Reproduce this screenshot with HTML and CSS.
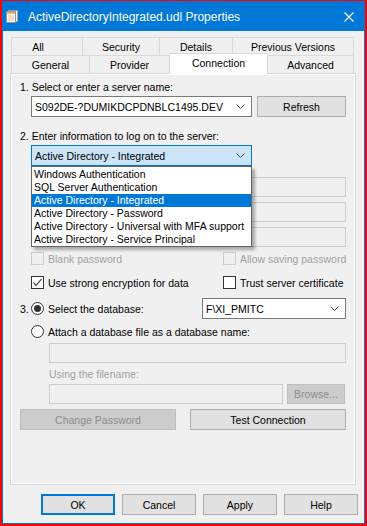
FILE: index.html
```html
<!DOCTYPE html>
<html lang="en">
<head>
    <meta charset="UTF-8">
    <title>ActiveDirectoryIntegrated.udl Properties</title>
    <link rel="stylesheet" href="styles.css">
</head>
<body>
    <div class="window">
        <div class="titlebar">
            <svg class="title-icon" width="12" height="13" viewBox="0 0 12 13">
                <rect x="2.5" y="0.5" width="9" height="11" fill="#f4f4f4" stroke="#9aa4b0"/>
                <rect x="0.5" y="1.5" width="9" height="11" fill="#ffffff" stroke="#8c96a3"/>
                <rect x="1" y="2" width="8" height="2" fill="#f0b27a"/>
                <line x1="2" y1="6" x2="8" y2="6" stroke="#e8b98c"/>
                <line x1="2" y1="8" x2="8" y2="8" stroke="#e8b98c"/>
                <line x1="2" y1="10" x2="8" y2="10" stroke="#e8b98c"/>
            </svg>
            <span class="title-text">ActiveDirectoryIntegrated.udl Properties</span>
            <svg class="close-icon" width="10" height="10" viewBox="0 0 10 10">
                <path d="M0.5 0.5 L9.5 9.5 M9.5 0.5 L0.5 9.5" stroke="#ffffff" stroke-width="1.1" fill="none"/>
            </svg>
        </div>

        <div class="client">
            <div class="tabs">
                <div class="tab-row">
                    <div class="tab tab-all">All</div>
                    <div class="tab tab-security">Security</div>
                    <div class="tab tab-details">Details</div>
                    <div class="tab tab-previous">Previous Versions</div>
                </div>
                <div class="tab-row">
                    <div class="tab tab-general">General</div>
                    <div class="tab tab-provider">Provider</div>
                    <div class="tab tab-connection selected">Connection</div>
                    <div class="tab tab-advanced">Advanced</div>
                </div>
            </div>

            <div class="panel">
                <div class="label">1. Select or enter a server name:</div>
                <div class="server-row">
                    <div class="combo server-combo">
                        <span class="combo-text">S092DE-?DUMIKDCPDNBLC1495.DEV</span>
                        <svg class="chevron" width="9" height="5" viewBox="0 0 9 5"><polyline points="0.5,0.5 4.5,4.5 8.5,0.5" fill="none" stroke="#444"/></svg>
                    </div>
                    <button class="btn refresh-btn">Refresh</button>
                </div>

                <div class="label step-two">2. Enter information to log on to the server:</div>
                <div class="auth-block">
                    <div class="combo auth-combo focused">
                        <span class="combo-text">Active Directory - Integrated</span>
                        <svg class="chevron" width="9" height="5" viewBox="0 0 9 5"><polyline points="0.5,0.5 4.5,4.5 8.5,0.5" fill="none" stroke="#444"/></svg>
                    </div>
                    <ul class="dropdown">
                        <li>Windows Authentication</li>
                        <li>SQL Server Authentication</li>
                        <li class="highlight">Active Directory - Integrated</li>
                        <li>Active Directory - Password</li>
                        <li>Active Directory - Universal with MFA support</li>
                        <li>Active Directory - Service Principal</li>
                    </ul>
                    <div class="cred-list">
                        <div class="textbox disabled"></div>
                        <div class="textbox disabled"></div>
                        <div class="textbox disabled"></div>
                    </div>
                    <div class="check-grid first">
                        <div class="check disabled"><span class="box"></span>Blank password</div>
                        <div class="check disabled"><span class="box"></span>Allow saving password</div>
                    </div>
                    <div class="check-grid second">
                        <div class="check">
                            <span class="box">
                                <svg width="11" height="11" viewBox="0 0 11 11"><polyline points="1.5,5.5 4,8.5 9.5,2" fill="none" stroke="#222" stroke-width="1.1"/></svg>
                            </span>Use strong encryption for data
                        </div>
                        <div class="check"><span class="box"></span>Trust server certificate</div>
                    </div>
                </div>

                <div class="db-row">
                    <span class="step-num">3.</span>
                    <div class="radio"><span class="dot on"></span>Select the database:</div>
                    <div class="combo db-combo">
                        <span class="combo-text">F\XI_PMITC</span>
                        <svg class="chevron" width="9" height="5" viewBox="0 0 9 5"><polyline points="0.5,0.5 4.5,4.5 8.5,0.5" fill="none" stroke="#444"/></svg>
                    </div>
                </div>
                <div class="radio attach-row"><span class="dot"></span>Attach a database file as a database name:</div>
                <div class="textbox disabled attach-box"></div>
                <div class="label disabled-text filename-label">Using the filename:</div>
                <div class="filename-row">
                    <div class="textbox disabled filename-box"></div>
                    <button class="btn disabled browse-btn">Browse...</button>
                </div>
                <div class="action-row">
                    <button class="btn disabled wide-btn">Change Password</button>
                    <button class="btn wide-btn">Test Connection</button>
                </div>
            </div>

            <div class="dialog-buttons">
                <button class="btn dlg-btn default">OK</button>
                <button class="btn dlg-btn">Cancel</button>
                <button class="btn dlg-btn">Apply</button>
                <button class="btn dlg-btn">Help</button>
            </div>
        </div>
    </div>
</body>
</html>
```

FILE: styles.css
```css
* {
    box-sizing: border-box;
}

body {
    margin: 0;
    background-color: #ff0000;
    font-family: "Liberation Sans", Arial, sans-serif;
    font-size: 10.5px;
    color: #000;
}

.window {
    margin: 1px 2px 2px 2px;
    height: 523px;
    border: 1px solid #0078d7;
    background-color: #f0f0f0;
    display: flex;
    flex-direction: column;
}

/* title bar */
.titlebar {
    height: 29px;
    flex-shrink: 0;
    background-color: #0078d7;
    color: #fff;
    display: flex;
    align-items: center;
    padding-left: 3px;
}

.title-icon {
    margin-top: -1px;
}

.title-text {
    margin-left: 10px;
    font-family: "Liberation Sans", Arial, sans-serif;
    font-size: 12px;
}

.close-icon {
    margin-left: auto;
    margin-right: 10px;
}

.client {
    flex: 1;
    display: flex;
    flex-direction: column;
    padding: 6px 8px 0 7px;
}

/* tabs */
.tabs {
    padding-left: 1px;
}

.tab-row {
    display: flex;
    align-items: flex-end;
}

.tab {
    height: 18px;
    border: 1px solid #d9d9d9;
    border-bottom: none;
    margin-left: -1px;
    display: flex;
    align-items: center;
    justify-content: center;
    background-color: #f0f0f0;
}

.tab:first-child {
    margin-left: 0;
}

.tab-all { width: 72px; padding-right: 18px; }
.tab-security { width: 78px; }
.tab-details { width: 74px; }
.tab-previous { width: 122px; }
.tab-general { width: 79px; }
.tab-provider { width: 81px; }
.tab-connection { width: 99px; }
.tab-advanced { width: 87px; }

.tab.selected {
    height: 21px;
    margin-top: -2px;
    margin-bottom: -1px;
    padding-bottom: 3px;
    background-color: #fff;
    z-index: 2;
}

/* tab page */
.panel {
    flex: 1;
    border: 1px solid #d9d9d9;
    box-shadow: inset 0 0 0 1px #fff;
    padding: 7px 9px 0 9px;
}

.label {
    line-height: 13px;
    height: 13px;
    white-space: nowrap;
}

.step-two {
    margin-top: 13px;
}

.disabled-text {
    color: #a0a0a0;
}

.server-row {
    display: flex;
    margin: 2px 0 0 11px;
    gap: 5px;
}

.combo {
    height: 21px;
    border: 1px solid #7a7a7a;
    background-color: #fff;
    display: flex;
    align-items: center;
    padding: 0 6px 0 3px;
    overflow: hidden;
}

.combo-text {
    flex: 1;
    white-space: nowrap;
    overflow: hidden;
}

.chevron {
    flex-shrink: 0;
    margin-left: 4px;
}

.server-combo {
    width: 221px;
}

.btn {
    font-family: "Liberation Sans", Arial, sans-serif;
    font-size: 10.5px;
    color: #000;
    height: 21px;
    background-color: #e1e1e1;
    border: 1px solid #adadad;
    padding: 0;
}

.btn.disabled {
    background-color: #cccccc;
    border-color: #bfbfbf;
    color: #8c8c8c;
}

.refresh-btn {
    flex: 1;
}

.auth-block {
    position: relative;
    margin-top: 2px;
}

.auth-combo {
    width: 221px;
    margin-left: 11px;
}

.combo.focused {
    background-color: #cce4f7;
    border-color: #0078d7;
}

.dropdown {
    position: absolute;
    top: 21px;
    left: 11px;
    width: 221px;
    margin: 0;
    padding: 1px 0 0 0;
    list-style: none;
    background-color: #fff;
    border: 1px solid #646464;
    box-shadow: 3px 3px 3px rgba(0, 0, 0, 0.3);
    z-index: 5;
}

.dropdown li {
    height: 13px;
    line-height: 13px;
    padding-left: 2px;
    white-space: nowrap;
}

.dropdown li.highlight {
    background-color: #0078d7;
    color: #fff;
}

.cred-list {
    margin: 11px 0 0 110px;
    display: flex;
    flex-direction: column;
    gap: 5px;
}

.textbox {
    height: 20px;
    border: 1px solid #7a7a7a;
    background-color: #fff;
}

.textbox.disabled {
    border-color: #cccccc;
    background-color: #f0f0f0;
}

.check-grid {
    display: grid;
    grid-template-columns: 192px 1fr;
    margin-left: 11px;
}

.check-grid.first {
    margin-top: 5px;
}

.check-grid.second {
    margin-top: 11px;
}

.check {
    display: flex;
    align-items: center;
    height: 13px;
    white-space: nowrap;
}

.check .box {
    width: 13px;
    height: 13px;
    border: 1px solid #333;
    background-color: #fff;
    margin-right: 4px;
    display: flex;
    align-items: center;
    justify-content: center;
}

.check.disabled {
    color: #a0a0a0;
}

.check.disabled .box {
    border-color: #cccccc;
    background-color: #f0f0f0;
}

.db-row {
    display: flex;
    align-items: center;
    margin-top: 9px;
    height: 21px;
}

.step-num {
    width: 11px;
}

.radio {
    display: flex;
    align-items: center;
    height: 13px;
    white-space: nowrap;
}

.radio .dot {
    width: 13px;
    height: 13px;
    border: 1px solid #333;
    border-radius: 50%;
    background-color: #fff;
    margin-right: 4px;
    display: flex;
    align-items: center;
    justify-content: center;
}

.radio .dot.on::after {
    content: "";
    width: 7px;
    height: 7px;
    border-radius: 50%;
    background-color: #333;
}

.db-combo {
    width: 144px;
    margin-left: auto;
}

.attach-row {
    margin: 6px 0 0 11px;
}

.attach-box {
    margin: 5px 0 0 29px;
}

.filename-label {
    margin: 5px 0 0 29px;
}

.filename-row {
    display: flex;
    gap: 4px;
    margin: 3px 0 0 29px;
}

.filename-box {
    width: 234px;
}

.browse-btn {
    width: 58px;
    height: 20px;
}

.action-row {
    display: flex;
    justify-content: space-between;
    margin-top: 5px;
}

.wide-btn {
    width: 156px;
}

/* OK / Cancel row */
.dialog-buttons {
    display: flex;
    justify-content: flex-end;
    gap: 7px;
    padding: 9px 0 8px 0;
    margin-right: -2px;
}

.dlg-btn {
    width: 74px;
}

.dlg-btn.default {
    border: 2px solid #0078d7;
}
```
